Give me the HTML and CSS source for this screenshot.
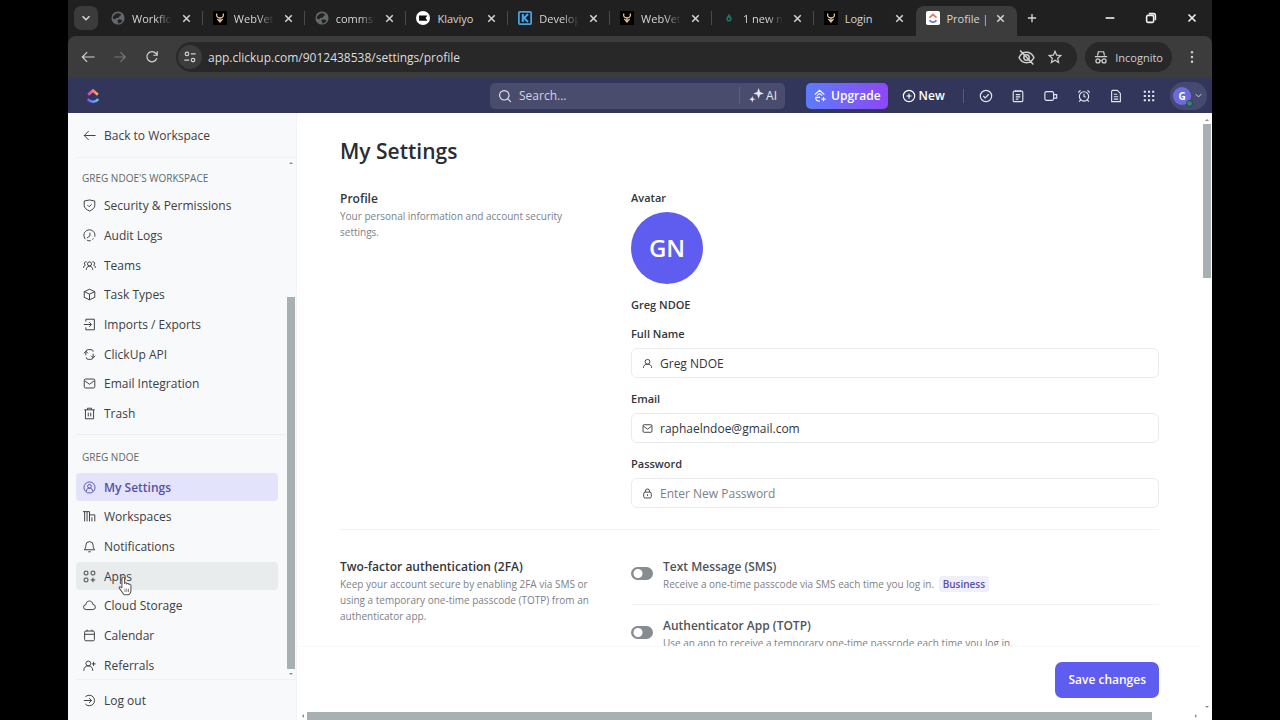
FILE: index.html
```
<!DOCTYPE html>
<html lang="en">
<head>
  <meta charset="UTF-8">
  <title>Profile | ClickUp</title>
  <link rel="stylesheet" href="styles.css">
</head>
<body>

  <svg class="sprite" aria-hidden="true">
    <symbol id="i-globe" viewBox="0 0 16 16"><circle cx="8" cy="8" r="7.5" fill="#63686b"/><path fill="#202223" d="M8 2.500c2 0 3 .8 4 2l-2 1-1 2-3 .5-1 1.500-3-1c0-3 3-6 6-6zM9 9.500l3 .5 1 1c-1 2-3 3-5 3V12l-1-1z"/></symbol>
    <symbol id="i-vet" viewBox="0 0 16 16"><rect width="16" height="16" rx="1" fill="#000"/><path fill="none" stroke="#e9bd8d" stroke-width="1.600" d="M4.500 3C3 6 5 7.500 8 8c3-.5 5-2 3.500-5M5 9l3 3.500L11 9M8 8v5"/></symbol>
    <symbol id="i-klaviyo" viewBox="0 0 16 16"><circle cx="8" cy="8" r="8" fill="#fff"/><path fill="#111" d="M3.500 5h9.500l-2 3 2 3H3.500z"/></symbol>
    <symbol id="i-dev" viewBox="0 0 16 16"><rect x="1" y="1" width="14" height="14" rx="1" fill="#101c28" stroke="#4ca3dc" stroke-width="2"/><path stroke="#4ca3dc" stroke-width="2.400" fill="none" d="M5.500 3.500v9M11.500 3.500 7 8l4.500 4.500"/></symbol>
    <symbol id="i-drop" viewBox="0 0 16 16"><path fill="#1c7566" d="M8 3c2 3 3 4 3 6a3 3 0 0 1-6 0c0-2 1-3 3-6z"/><circle cx="8" cy="9" r="1.200" fill="#202020"/></symbol>
    <symbol id="i-cu" viewBox="0 0 16 16"><rect width="16" height="16" rx="2" fill="#fff"/><path fill="none" stroke="#e0795f" stroke-width="2" d="M4 7.500 8 4l4 3.500"/><path fill="none" stroke="#6676c9" stroke-width="2" d="M4 10.500c2.500 3 5.500 3 8 0"/></symbol>
    <symbol id="i-x" viewBox="0 0 16 16"><path d="m4 4 8 8M12 4l-8 8"/></symbol>
    <symbol id="i-down" viewBox="0 0 16 16"><path d="m4 6 4 4 4-4"/></symbol>
    <symbol id="i-plus" viewBox="0 0 16 16"><path d="M8 2.500v11M2.500 8h11"/></symbol>
    <symbol id="i-min" viewBox="0 0 16 16"><path d="M3 8h10"/></symbol>
    <symbol id="i-max" viewBox="0 0 16 16"><rect x="3" y="5" width="8" height="8" rx="1.500"/><path d="M5.500 3H11a2 2 0 0 1 2 2v5.500"/></symbol>
    <symbol id="i-left" viewBox="0 0 16 16"><path d="M15.500 8H1.500m5.500-5.500L1.500 8l5.500 5.500"/></symbol>
    <symbol id="i-right" viewBox="0 0 16 16"><path d="M1.500 8H14M8.500 2.500 14 8l-5.500 5.500"/></symbol>
    <symbol id="i-reload" viewBox="0 0 16 16"><path d="M13.500 9.500A5.800 5.800 0 1 1 12.500 4L14 6M14 1.500V6H9.500"/></symbol>
    <symbol id="i-tune" viewBox="0 0 16 16"><circle cx="4.500" cy="4.500" r="2"/><path d="M9 4.500h5.500M1.500 11.500H7"/><circle cx="11.500" cy="11.500" r="2"/></symbol>
    <symbol id="i-eye" viewBox="0 0 16 16"><path d="M1 8c3-6.500 11-6.500 14 0-3 6.500-11 6.500-14 0zM2 1.500l12.500 13"/><circle cx="8" cy="8" r="2.500"/></symbol>
    <symbol id="i-star" viewBox="0 0 16 16"><path d="m8 1.500 1.900 4.400 4.800.4-3.600 3.200 1 4.700L8 11.700l-4.100 2.500 1-4.700-3.600-3.200 4.800-.4z"/></symbol>
    <symbol id="i-incog" viewBox="0 0 16 16"><path d="M4 6.500 5 2h6l1 4.500M1 7.500h14M7 12.500q1-1 2 0"/><circle cx="4.500" cy="12.500" r="2.300"/><circle cx="11.500" cy="12.500" r="2.300"/></symbol>
    <symbol id="i-dots" viewBox="0 0 16 16"><g fill="currentColor" stroke="none"><circle cx="8" cy="2.500" r="1.400"/><circle cx="8" cy="8" r="1.400"/><circle cx="8" cy="13.500" r="1.400"/></g></symbol>
    <symbol id="i-search" viewBox="0 0 16 16"><circle cx="7.200" cy="7.200" r="5.400"/><path d="m11.200 11.200 3.500 3.500"/></symbol>
    <symbol id="i-spark" viewBox="0 0 16 16"><path fill="currentColor" stroke="none" d="m10 1 1.300 3.700L15 6l-3.700 1.300L10 11 8.700 7.300 5 6l3.700-1.300zM4 8.500l.8 2.200 2.200.8-2.200.8L4 14.500l-.8-2.200-2.200-.8 2.200-.8z"/></symbol>
    <symbol id="i-upgrade" viewBox="0 0 16 16"><path d="M2 6.500 7.500 1.500 13 6.500M4.500 7.500l3-2.500 3 2.500M3 9.500h5M3 9.500c0 3 2 4.500 5 4.500M12 9v5M9.500 11.500h5"/></symbol>
    <symbol id="i-new" viewBox="0 0 16 16"><circle cx="8" cy="8" r="6.500"/><path d="M8 5v6M5 8h6"/></symbol>
    <symbol id="i-check" viewBox="0 0 16 16"><circle cx="8" cy="8" r="6.500"/><path d="m5 8 2 2.200L11.200 6"/></symbol>
    <symbol id="i-note" viewBox="0 0 16 16"><rect x="2.500" y="2.500" width="11" height="12" rx="1.500"/><path d="M5.500 1v2.500M8 1v2.500M10.500 1v2.500M5.500 6.500h5M5.500 9h5M5.500 11.500h3"/></symbol>
    <symbol id="i-video" viewBox="0 0 16 16"><rect x="1" y="3" width="10" height="10" rx="1.800"/><path d="M11 6.500h3.500v4H11"/></symbol>
    <symbol id="i-alarm" viewBox="0 0 16 16"><circle cx="8" cy="8.500" r="5.300"/><path d="M8 5.500v3l2 1M1.500 4 4 1.500M14.500 4 12 1.500M4.200 12.500 2.500 14.500M11.800 12.500l1.700 2"/></symbol>
    <symbol id="i-doc" viewBox="0 0 16 16"><path d="M4 1.500h5.500l3.500 3.500v9.500H3v-12zM5.500 6h4M5.500 8.800h5M5.500 11.500h5"/></symbol>
    <symbol id="i-grid" viewBox="0 0 16 16"><path fill="currentColor" stroke="none" d="M2 2h2.400v2.400H2zM6.800 2h2.400v2.400H6.800zM11.600 2H14v2.400h-2.400zM2 6.800h2.400v2.400H2zM6.800 6.800h2.400v2.400H6.800zM11.600 6.800H14v2.400h-2.400zM2 11.600h2.400V14H2zM6.800 11.600h2.400V14H6.800zM11.600 11.600H14V14h-2.400z"/></symbol>
    <symbol id="i-shield" viewBox="0 0 16 16"><path d="M8 1.200 14.500 2.500v5.500c0 3-2.500 5-6.500 6.800C4 13 1.500 11 1.500 8V2.500zM5.500 7.500l2 2 3.200-3"/></symbol>
    <symbol id="i-audit" viewBox="0 0 16 16"><path d="M3 12.500A6.800 6.800 0 1 1 14.500 9.500M8.500 4.500V8.500L5 11M5 13.800c1.500.8 3 .9 4.500.6M11.500 13l1.500-1.200"/></symbol>
    <symbol id="i-teams" viewBox="0 0 16 16"><circle cx="8" cy="6" r="2.500"/><path d="M4 13.500c0-3 1.500-4.500 4-4.500s4 1.500 4 4.500M4.500 3.500a2 2 0 0 0-1.500 4C1.500 8 .8 9 .8 11M11.500 3.500a2 2 0 0 1 1.500 4c1.500.5 2.200 1.500 2.200 3.500"/></symbol>
    <symbol id="i-cube" viewBox="0 0 16 16"><path d="M8 1.500 14.500 4.500v7L8 14.500 1.500 11.500v-7zM1.500 4.500 8 7.500l6.500-3M8 7.500v7"/></symbol>
    <symbol id="i-import" viewBox="0 0 16 16"><path d="M3.500 4.500v-3h10.500v13H3.500v-3M1 8h9M7.500 5 10.500 8l-3 3"/></symbol>
    <symbol id="i-api" viewBox="0 0 16 16"><path d="M3.500 9V5a3 3 0 0 1 3-3h3.500a2.500 2.500 0 0 1 2.500 2.500M1 6.500 3.500 4 6 6.500M12.500 7v4a3 3 0 0 1-3 3H6.500A2.500 2.500 0 0 1 4 11.500M10 9.500l2.500 2.500L15 9.500"/></symbol>
    <symbol id="i-mail" viewBox="0 0 16 16"><rect x="1.500" y="2.500" width="13" height="11" rx="1.500"/><path d="m2 4.500 6 4.500 6-4.500"/></symbol>
    <symbol id="i-trash" viewBox="0 0 16 16"><path d="M1.500 3.500h13M5.500 3.500v-2h5v2M3 3.500v11h10v-11M6.500 7v4.500M9.500 7v4.500"/></symbol>
    <symbol id="i-me" viewBox="0 0 16 16"><circle cx="8" cy="8" r="6.800"/><circle cx="8" cy="6.500" r="2.300"/><path d="M4.200 12.500c0-2.500 1.500-3.700 3.800-3.700s3.800 1.200 3.800 3.700"/></symbol>
    <symbol id="i-work" viewBox="0 0 16 16"><path d="M2 14V2M0 2h8v12M5 2v12M8 6h6.500v8M11 9v5"/></symbol>
    <symbol id="i-bell" viewBox="0 0 16 16"><path d="M1.500 12h13c-1.500-1.500-2-2.500-2-5.500a4.500 4.500 0 0 0-9 0c0 3-.5 4-2 5.500zM6.500 14.500h3"/></symbol>
    <symbol id="i-apps" viewBox="0 0 16 16"><rect x="1.500" y="1.500" width="4.500" height="4.500" rx="1"/><rect x="10" y="1.500" width="4.500" height="4.500" rx="1"/><rect x="1.500" y="10" width="4.500" height="4.500" rx="1"/><path d="M12.200 9.500v5.500M9.500 12.200H15"/></symbol>
    <symbol id="i-cloud" viewBox="0 0 16 16"><path d="M4 13a3 3 0 0 1-.5-6C4 3.500 6 2.500 8 2.500S12 4 12.200 6.800A3 3 0 0 1 12 13z"/></symbol>
    <symbol id="i-cal" viewBox="0 0 16 16"><rect x="2" y="2.500" width="12" height="12" rx="1.500"/><path d="M2 6.500h12M5 .8v2M11 .8v2"/></symbol>
    <symbol id="i-refer" viewBox="0 0 16 16"><circle cx="6.500" cy="5.500" r="3"/><path d="M1 14.500c0-4 2-6 5.500-6s5.500 2 5.500 6M13 3.500v5M10.800 6h4.700"/></symbol>
    <symbol id="i-logout" viewBox="0 0 16 16"><path d="M3 3.500A6.500 6.500 0 1 1 3 12.500M1 8h9.500M7.500 5l3 3-3 3"/></symbol>
    <symbol id="i-user" viewBox="0 0 16 16"><circle cx="8" cy="5.500" r="3.500"/><path d="M2 14.500c0-3.500 2-5.500 6-5.500s6 2 6 5.500"/></symbol>
    <symbol id="i-lock" viewBox="0 0 16 16"><rect x="2.500" y="6" width="11" height="8.500" rx="2"/><path d="M5 6V4.500a3 3 0 0 1 6 0V6M8 9v2.500"/></symbol>
  </svg>

  <div class="window">

    <div class="tab-bar">
      <button class="tab-search" aria-label="Search tabs"><svg class="icon"><use href="#i-down"/></svg></button>
      <div class="tabs">
        <div class="tab"><svg class="favicon"><use href="#i-globe"/></svg><span class="tab-name">Workflow</span><button class="tab-close" aria-label="Close"><svg class="icon"><use href="#i-x"/></svg></button></div>
        <div class="tab"><svg class="favicon"><use href="#i-vet"/></svg><span class="tab-name">WebVet</span><button class="tab-close" aria-label="Close"><svg class="icon"><use href="#i-x"/></svg></button></div>
        <div class="tab"><svg class="favicon"><use href="#i-globe"/></svg><span class="tab-name">commsr</span><button class="tab-close" aria-label="Close"><svg class="icon"><use href="#i-x"/></svg></button></div>
        <div class="tab"><svg class="favicon"><use href="#i-klaviyo"/></svg><span class="tab-name whole">Klaviyo</span><button class="tab-close" aria-label="Close"><svg class="icon"><use href="#i-x"/></svg></button></div>
        <div class="tab"><svg class="favicon"><use href="#i-dev"/></svg><span class="tab-name">Develop</span><button class="tab-close" aria-label="Close"><svg class="icon"><use href="#i-x"/></svg></button></div>
        <div class="tab"><svg class="favicon"><use href="#i-vet"/></svg><span class="tab-name">WebVet</span><button class="tab-close" aria-label="Close"><svg class="icon"><use href="#i-x"/></svg></button></div>
        <div class="tab"><svg class="favicon"><use href="#i-drop"/></svg><span class="tab-name">1 new n</span><button class="tab-close" aria-label="Close"><svg class="icon"><use href="#i-x"/></svg></button></div>
        <div class="tab"><svg class="favicon"><use href="#i-vet"/></svg><span class="tab-name whole">Login</span><button class="tab-close" aria-label="Close"><svg class="icon"><use href="#i-x"/></svg></button></div>
        <div class="tab active"><svg class="favicon"><use href="#i-cu"/></svg><span class="tab-name whole">Profile |</span><button class="tab-close" aria-label="Close"><svg class="icon"><use href="#i-x"/></svg></button></div>
      </div>
      <button class="new-tab" aria-label="New tab"><svg class="icon"><use href="#i-plus"/></svg></button>
      <div class="window-controls">
        <button aria-label="Minimize"><svg class="icon"><use href="#i-min"/></svg></button>
        <button aria-label="Restore"><svg class="icon"><use href="#i-max"/></svg></button>
        <button aria-label="Close window"><svg class="icon"><use href="#i-x"/></svg></button>
      </div>
    </div>

    <div class="toolbar">
      <button aria-label="Back"><svg class="icon"><use href="#i-left"/></svg></button>
      <button class="dim" aria-label="Forward"><svg class="icon"><use href="#i-right"/></svg></button>
      <button aria-label="Reload"><svg class="icon"><use href="#i-reload"/></svg></button>
      <div class="address">
        <button class="site-info" aria-label="Site information"><svg class="icon"><use href="#i-tune"/></svg></button>
        <input class="url" type="text" aria-label="Address" value="app.clickup.com/9012438538/settings/profile">
        <button aria-label="Third-party cookies blocked"><svg class="icon large"><use href="#i-eye"/></svg></button>
        <button aria-label="Bookmark"><svg class="icon"><use href="#i-star"/></svg></button>
      </div>
      <div class="incognito"><svg class="icon"><use href="#i-incog"/></svg><span>Incognito</span></div>
      <button aria-label="Menu"><svg class="icon"><use href="#i-dots"/></svg></button>
    </div>

    <header class="app-header">
      <svg class="logo" viewBox="0 0 16 18">
        <defs>
          <linearGradient id="warm"><stop offset="0" stop-color="#e83fc0"/><stop offset="1" stop-color="#ffb545"/></linearGradient>
          <linearGradient id="cool"><stop offset="0" stop-color="#7a5cff"/><stop offset="1" stop-color="#58c8ff"/></linearGradient>
        </defs>
        <path d="M2.500 7.500 8 2.800l5.500 4.700" fill="none" stroke="url(#warm)" stroke-width="3"/>
        <path d="M2 12.500c3.500 4 8.500 4 12 0" fill="none" stroke="url(#cool)" stroke-width="3"/>
      </svg>
      <div class="search">
        <svg class="icon"><use href="#i-search"/></svg>
        <input type="text" placeholder="Search..." aria-label="Search">
        <button class="ai"><svg class="icon large"><use href="#i-spark"/></svg>AI</button>
      </div>
      <div class="header-actions">
        <button class="upgrade"><svg class="icon"><use href="#i-upgrade"/></svg>Upgrade</button>
        <button class="new"><svg class="icon"><use href="#i-new"/></svg>New</button>
        <div class="quick">
          <button aria-label="My tasks"><svg class="icon"><use href="#i-check"/></svg></button>
          <button aria-label="Notepad"><svg class="icon"><use href="#i-note"/></svg></button>
          <button aria-label="Record clip"><svg class="icon"><use href="#i-video"/></svg></button>
          <button aria-label="Reminder"><svg class="icon"><use href="#i-alarm"/></svg></button>
          <button aria-label="New doc"><svg class="icon"><use href="#i-doc"/></svg></button>
          <button aria-label="Quick menu"><svg class="icon"><use href="#i-grid"/></svg></button>
        </div>
        <button class="account" aria-label="Account"><span class="account-avatar">G<i class="status"></i></span><svg class="icon small"><use href="#i-down"/></svg></button>
      </div>
    </header>

    <div class="app">
      <aside class="sidebar">
        <a class="nav-item back" href="#"><svg class="icon"><use href="#i-left"/></svg>Back to Workspace</a>
        <div class="nav-scroll">
          <nav class="nav">
            <h2 class="nav-title">GREG NDOE'S WORKSPACE</h2>
            <a class="nav-item" href="#"><svg class="icon"><use href="#i-shield"/></svg>Security &amp; Permissions</a>
            <a class="nav-item" href="#"><svg class="icon"><use href="#i-audit"/></svg>Audit Logs</a>
            <a class="nav-item" href="#"><svg class="icon"><use href="#i-teams"/></svg>Teams</a>
            <a class="nav-item" href="#"><svg class="icon"><use href="#i-cube"/></svg>Task Types</a>
            <a class="nav-item" href="#"><svg class="icon"><use href="#i-import"/></svg>Imports / Exports</a>
            <a class="nav-item" href="#"><svg class="icon"><use href="#i-api"/></svg>ClickUp API</a>
            <a class="nav-item" href="#"><svg class="icon"><use href="#i-mail"/></svg>Email Integration</a>
            <a class="nav-item" href="#"><svg class="icon"><use href="#i-trash"/></svg>Trash</a>
            <hr class="nav-line">
            <h2 class="nav-title">GREG NDOE</h2>
            <a class="nav-item current" href="#"><svg class="icon"><use href="#i-me"/></svg>My Settings</a>
            <a class="nav-item" href="#"><svg class="icon"><use href="#i-work"/></svg>Workspaces</a>
            <a class="nav-item" href="#"><svg class="icon"><use href="#i-bell"/></svg>Notifications</a>
            <a class="nav-item hovered" href="#"><svg class="icon"><use href="#i-apps"/></svg>Apps
              <svg class="pointer" viewBox="0 0 16 22"><path fill="#fff" stroke="#555" stroke-width="1.200" stroke-linejoin="round" d="M4.500 13V2.500a1.500 1.500 0 0 1 3 0V8c.5-1 2.500-.8 2.500.6.7-.9 2.400-.6 2.500.7.800-.6 2.300-.2 2.300 1.200V15c0 3-1.500 5.500-3 6H7c-2-2-3.500-5-5.500-7.500-.8-1.200.8-2.200 1.800-1.200z"/><path stroke="#777" d="M8 14v4M10 14v4M12 14v4"/></svg>
            </a>
            <a class="nav-item" href="#"><svg class="icon"><use href="#i-cloud"/></svg>Cloud Storage</a>
            <a class="nav-item" href="#"><svg class="icon"><use href="#i-cal"/></svg>Calendar</a>
            <a class="nav-item" href="#"><svg class="icon"><use href="#i-refer"/></svg>Referrals</a>
          </nav>
          <div class="bar side-bar"><i class="arrow up"></i><span class="thumb"></span><i class="arrow down"></i></div>
        </div>
        <a class="nav-item logout" href="#"><svg class="icon"><use href="#i-logout"/></svg>Log out</a>
      </aside>

      <main class="main">
        <div class="page">
          <div class="content">
            <h1>My Settings</h1>

            <section class="block">
              <div class="about">
                <h2>Profile</h2>
                <p>Your personal information and account security settings.</p>
              </div>
              <div class="fields">
                <div class="label">Avatar</div>
                <div class="avatar">GN</div>
                <div class="label person">Greg NDOE</div>

                <label class="label" for="fullName">Full Name</label>
                <div class="field"><svg class="icon small"><use href="#i-user"/></svg><input type="text" id="fullName" value="Greg NDOE"></div>

                <label class="label" for="email">Email</label>
                <div class="field"><svg class="icon small"><use href="#i-mail"/></svg><input type="email" id="email" value="raphaelndoe@gmail.com"></div>

                <label class="label" for="password">Password</label>
                <div class="field"><svg class="icon small"><use href="#i-lock"/></svg><input type="password" id="password" placeholder="Enter New Password"></div>
              </div>
            </section>

            <section class="block second">
              <div class="about">
                <h2>Two-factor authentication (2FA)</h2>
                <p>Keep your account secure by enabling 2FA via SMS or using a temporary one-time passcode (TOTP) from an authenticator app.</p>
              </div>
              <div class="options">
                <div class="option">
                  <input class="toggle" type="checkbox" id="sms">
                  <div>
                    <label for="sms">Text Message (SMS)</label>
                    <p>Receive a one-time passcode via SMS each time you log in. <span class="plan">Business</span></p>
                  </div>
                </div>
                <div class="option">
                  <input class="toggle" type="checkbox" id="totp">
                  <div>
                    <label for="totp">Authenticator App (TOTP)</label>
                    <p>Use an app to receive a temporary one-time passcode each time you log in.</p>
                  </div>
                </div>
              </div>
            </section>
          </div>

          <div class="save-row"><button class="save">Save changes</button></div>
          <div class="bar bottom-bar"><i class="arrow prev"></i><span class="thumb"></span><i class="arrow next"></i></div>
        </div>
        <div class="bar main-bar"><i class="arrow up"></i><span class="thumb"></span><i class="arrow down"></i></div>
      </main>
    </div>
  </div>

</body>
</html>
```
FILE: styles.css
```
* {
  box-sizing: border-box;
}

body {
  margin: 0;
  background: #000;
  font-family: 'Open Sans', 'Noto Sans', sans-serif;
  font-size: 12px;
  color: #33363a;
}

h1, h2, p {
  margin: 0;
}

button, input {
  font: inherit;
  color: inherit;
  background: none;
  border: none;
  padding: 0;
  margin: 0;
  min-width: 0;
  outline: none;
}

button {
  display: flex;
  align-items: center;
  justify-content: center;
  cursor: pointer;
}

a {
  color: inherit;
  text-decoration: none;
}

.sprite {
  display: none;
}

.icon {
  width: 14px;
  height: 14px;
  flex: none;
  fill: none;
  stroke: currentColor;
  stroke-width: 1.3;
}

.icon.small {
  width: 11px;
  height: 11px;
}

.icon.large {
  width: 17px;
  height: 17px;
}

.window {
  height: 100vh;
  margin: 0 68px;
  display: flex;
  flex-direction: column;
  overflow: hidden;
  background: #202020;
}

/* browser tabs */
.tab-bar {
  height: 36px;
  flex: none;
  display: flex;
  align-items: center;
  padding: 0 0 0 6px;
  color: #d6d6d6;
}

.tab-search {
  width: 24px;
  height: 24px;
  margin-right: 3px;
  border-radius: 7px;
  background: #3b3b3b;
}

.tab-search .icon,
.window-controls .icon {
  stroke-width: 1.8;
}

.tabs {
  flex: 0 1 913px;
  display: flex;
  align-self: stretch;
}

.tab {
  flex: 1 1 0;
  min-width: 0;
  display: flex;
  align-items: center;
  padding: 0 10px;
  background: linear-gradient(#4a4a4a, #4a4a4a) right center / 1px 14px no-repeat;
  font-size: 11px;
}

.tab.active {
  margin-top: 6px;
  padding-bottom: 6px;
  border-radius: 8px 8px 0 0;
  background: #3c3c3c;
}

.tab:nth-last-child(2) {
  background: none;
}

.favicon {
  width: 14px;
  height: 14px;
  flex: none;
  margin-right: 7px;
}

.tab-name {
  flex: 1;
  min-width: 0;
  overflow: hidden;
  white-space: nowrap;
  margin-right: 8px;
  -webkit-mask-image: linear-gradient(to right, #000 60%, transparent);
  mask-image: linear-gradient(to right, #000 60%, transparent);
}

.tab-name.whole {
  -webkit-mask-image: none;
  mask-image: none;
}

.tab-close .icon {
  width: 13px;
  height: 13px;
  stroke-width: 1.8;
}

.new-tab {
  width: 30px;
}

.new-tab .icon {
  width: 12px;
  height: 12px;
  stroke-width: 1.8;
}

.window-controls {
  margin-left: auto;
  display: flex;
  color: #f2f2f2;
}

.window-controls button {
  width: 41px;
  height: 36px;
}

/* address bar */
.toolbar {
  height: 42px;
  flex: none;
  display: flex;
  align-items: center;
  padding: 0 4px;
  background: #3c3c3c;
  border-radius: 8px 8px 0 0;
  color: #d0d0d0;
}

.toolbar .icon {
  stroke-width: 1.4;
}

.toolbar > button {
  width: 32px;
  height: 32px;
}

.toolbar .dim {
  color: #777;
}

.address {
  flex: 1;
  height: 30px;
  display: flex;
  align-items: center;
  gap: 13px;
  margin-left: 8px;
  padding: 0 15px 0 2px;
  border-radius: 15px;
  background: #282828;
}

.site-info {
  width: 24px;
  height: 24px;
  border-radius: 50%;
  background: #3c3c3c;
}

.url {
  flex: 1;
  margin-left: -7px;
  font-size: 12px;
  color: #dedede;
}

.incognito {
  height: 30px;
  display: flex;
  align-items: center;
  gap: 7px;
  margin: 0 4px 0 8px;
  padding: 0 9px;
  border-radius: 15px;
  background: #282828;
  font-size: 11px;
}

/* app header */
.app-header {
  height: 35px;
  flex: none;
  display: grid;
  grid-template-columns: 1fr 295px 1fr;
  align-items: center;
  padding-right: 5px;
  background: #32365a;
  color: #e4e6f0;
}

.logo {
  width: 14px;
  height: 16px;
  margin-left: 18px;
}

.search {
  height: 26px;
  display: flex;
  align-items: center;
  gap: 7px;
  padding-left: 8px;
  border-radius: 5px;
  background: #4a4c6d;
}

.search input {
  flex: 1;
}

.search input::placeholder {
  color: #d2d4e0;
  opacity: 1;
}

.ai {
  gap: 1px;
  padding: 0 8px;
  border-left: 1px solid #5b5e7f;
}

.header-actions {
  display: flex;
  align-items: center;
  padding-left: 21px;
}

.upgrade {
  height: 26px;
  gap: 4px;
  padding: 0 7px;
  border-radius: 5px;
  background: linear-gradient(90deg, #5c7cfa, #8d48f5);
  color: #fff;
  font-weight: 600;
}

.new {
  gap: 3px;
  padding-left: 14px;
  color: #fff;
  font-weight: 600;
}

.quick {
  flex: 1;
  display: flex;
  justify-content: space-between;
  margin: 0 14px 0 18px;
  padding-left: 15px;
  border-left: 1px solid #565a7d;
}

.account {
  height: 28px;
  gap: 2px;
  padding: 0 3px;
  border-radius: 14px;
  background: #464a70;
}

.account-avatar {
  position: relative;
  width: 18px;
  height: 18px;
  border-radius: 50%;
  background: #6b6be0;
  color: #fff;
  font-size: 10px;
  font-weight: 700;
  line-height: 18px;
}

.status {
  position: absolute;
  right: -2px;
  bottom: -2px;
  width: 7px;
  height: 7px;
  border: 1px solid #32365a;
  border-radius: 50%;
  background: #2d8a63;
}

/* sidebar */
.app {
  flex: 1;
  min-height: 0;
  display: flex;
  background: #fff;
}

.sidebar {
  width: 229px;
  flex: none;
  display: flex;
  flex-direction: column;
  background: #f7f9fa;
  border-right: 1px solid #f1f3f4;
}

.nav-item {
  position: relative;
  display: flex;
  align-items: center;
  gap: 8px;
  padding-left: 7px;
  border-radius: 4px;
  color: #3d4043;
}

.nav-item .icon {
  width: 13px;
  height: 13px;
  stroke-width: 1.2;
}

.back {
  height: 44px;
  margin: 0 8px;
}

.logout {
  height: 40px;
  margin: 0 8px;
}

.nav-scroll {
  flex: 1;
  min-height: 0;
  display: flex;
  margin-left: 8px;
  border-top: 1px solid #eff1f2;
  border-bottom: 1px solid #eff1f2;
}

.nav {
  flex: 1;
  display: flex;
  flex-direction: column;
  gap: 2px;
}

.nav .nav-item {
  flex: 1;
  margin-right: 8px;
}

.nav-title {
  padding: 12px 0 4px 6px;
  font-size: 10px;
  line-height: 16px;
  font-weight: 400;
  color: #63676c;
}

.nav-line {
  width: 100%;
  margin: 5px 0 0;
  border: none;
  border-top: 1px solid #eceeef;
}

.nav-line + .nav-title {
  padding-bottom: 6px;
}

.nav-item.current {
  background: #e3e4fb;
  color: #5850a8;
  font-weight: 600;
}

.nav-item.hovered {
  background: #e9ecec;
}

.pointer {
  position: absolute;
  left: 42px;
  top: 14px;
  z-index: 1;
  width: 14px;
  height: 20px;
}

/* scrollbars */
.bar {
  display: flex;
  flex-direction: column;
  align-items: center;
}

.thumb {
  background: #a9b0b2;
}

.arrow {
  border: 2px solid transparent;
}

.arrow.up {
  border-bottom-color: #8b8f92;
}

.arrow.down {
  border-top-color: #8b8f92;
  margin-top: auto;
}

.arrow.prev {
  border-right-color: #8b8f92;
}

.arrow.next {
  border-left-color: #8b8f92;
  margin-left: auto;
}

.side-bar {
  width: 9px;
  margin-right: 1px;
  padding: 2px 0;
}

.side-bar .thumb {
  width: 8px;
  height: 72%;
  margin-top: auto;
}

.side-bar .arrow.down {
  margin-top: 4px;
}

.main-bar {
  width: 10px;
  padding: 4px 0 10px;
}

.main-bar .thumb {
  width: 8px;
  height: 26%;
  margin-top: 3px;
}

.bottom-bar {
  height: 8px;
  flex: none;
  flex-direction: row;
  padding: 0 3px;
}

.bottom-bar .thumb {
  width: 94%;
  height: 8px;
  margin-left: 3px;
}

/* settings page */
.main {
  flex: 1;
  min-width: 0;
  display: flex;
}

.page {
  flex: 1;
  min-width: 0;
  display: flex;
  flex-direction: column;
}

.content {
  flex: 1;
  min-height: 0;
  overflow: hidden;
  padding: 23px 43px 0;
}

h1 {
  font-size: 21px;
  line-height: 30px;
  font-weight: 600;
  color: #2a2d31;
}

.block {
  display: grid;
  grid-template-columns: 291px 1fr;
  padding: 24px 0 21px;
}

.block.second {
  padding-top: 28px;
  border-top: 1px solid #f2f3f4;
}

.about {
  padding-right: 34px;
}

.about h2 {
  font-size: 12px;
  line-height: 18px;
  font-weight: 600;
}

.block p {
  font-size: 10px;
  line-height: 16px;
  color: #7d8187;
}

.label {
  display: block;
  font-size: 11px;
  line-height: 16px;
  font-weight: 600;
}

.avatar {
  width: 72px;
  height: 72px;
  margin: 6px 0 13px;
  border-radius: 50%;
  background: #5f5cf0;
  color: #fff;
  font-size: 24px;
  line-height: 72px;
  font-weight: 600;
  text-align: center;
}

.person {
  margin-bottom: 13px;
}

.field {
  height: 30px;
  display: flex;
  align-items: center;
  gap: 7px;
  margin: 6px 0 13px;
  padding: 0 10px;
  border: 1px solid #e9ebec;
  border-radius: 6px;
}

.field:last-child {
  margin-bottom: 0;
}

.field input {
  flex: 1;
}

.field input::placeholder {
  color: #7d8187;
  opacity: 1;
}

.option {
  display: flex;
  gap: 10px;
  padding-bottom: 12px;
}

.option + .option {
  padding-top: 12px;
  border-top: 1px solid #f2f3f4;
}

.option label {
  display: block;
  font-size: 12px;
  line-height: 18px;
  font-weight: 600;
  color: #505459;
}

.toggle {
  appearance: none;
  width: 22px;
  height: 13px;
  flex: none;
  margin-top: 9px;
  border-radius: 7px;
  background: radial-gradient(circle at 7px center, #fff 4px, transparent 5px) #878b92;
}

.plan {
  display: inline-block;
  margin-left: 2px;
  padding: 0 4px;
  border-radius: 3px;
  background: #f0effc;
  color: #5850a8;
  font-weight: 600;
}

.save-row {
  height: 66px;
  flex: none;
  display: flex;
  justify-content: flex-end;
  align-items: center;
  padding-right: 43px;
  border-top: 1px solid #f8f9f9;
}

.save {
  height: 36px;
  padding: 0 13px;
  border-radius: 7px;
  background: #5f5cf0;
  color: #fff;
  font-weight: 600;
}
```
